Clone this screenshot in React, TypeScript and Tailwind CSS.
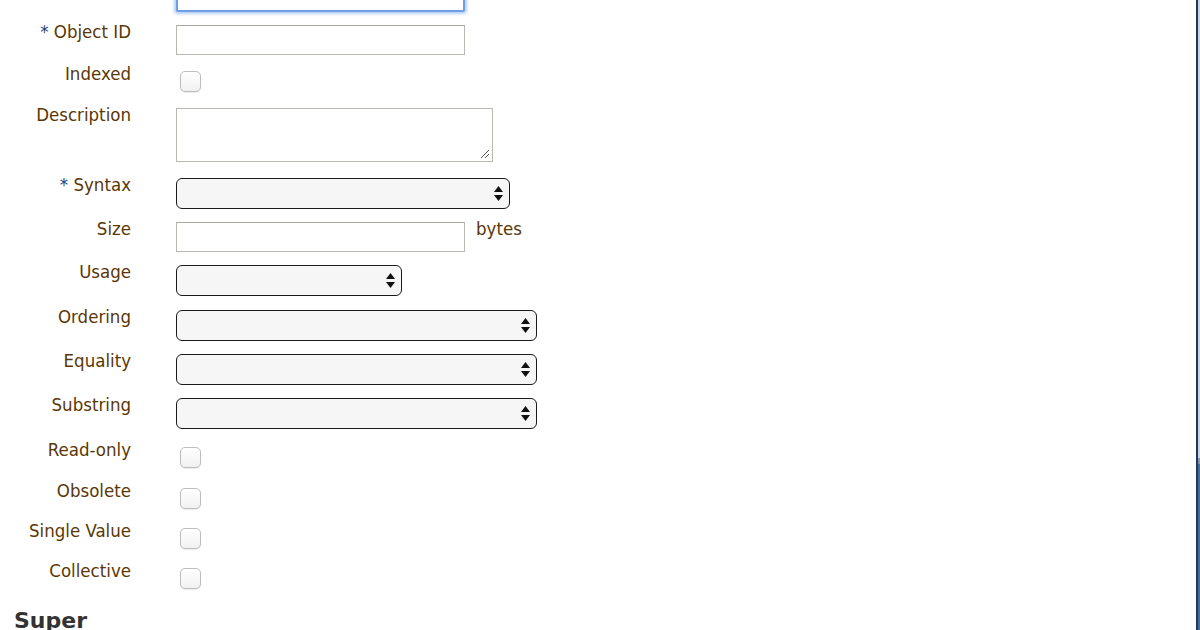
import React from "react";

const FONT = { fontFamily: '"DejaVu Sans Condensed", "DejaVu Sans", Verdana, sans-serif' };

function Label({ text, req, offset }: { text: string; req?: boolean; offset: string }) {
  return (
    <div
      className={`w-[131px] shrink-0 whitespace-nowrap text-right text-[18.5px] leading-[22px] text-[#5a3705] ${offset}`}
      style={FONT}
    >
      {req && <span className="text-[#1d3f7c]">* </span>}
      {text}
    </div>
  );
}

function Arrows() {
  return (
    <svg width="9" height="15" viewBox="0 0 9 15" className="shrink-0">
      <polygon points="0,6 4.5,0 9,6" fill="#111" />
      <polygon points="0,9 9,9 4.5,15" fill="#111" />
    </svg>
  );
}

function Select({ w }: { w: string }) {
  return (
    <div
      className={`${w} h-[31px] ml-[45px] rounded-[6px] border-[1.5px] border-[#1a1a1a] bg-[#f6f6f6] flex items-center justify-end pr-[6px]`}
    >
      <Arrows />
    </div>
  );
}

function Input({ w = "w-[289px]" }: { w?: string }) {
  return (
    <div
      className={`${w} h-[30px] ml-[45px] border-[1.5px] border-[#b8b8b2] border-t-[#a8a8a3] bg-white`}
    />
  );
}

function Checkbox() {
  return (
    <div className="ml-[49px] w-[21px] h-[21px] rounded-[5px] border border-[#bdbdbd] bg-gradient-to-b from-white to-[#f1f1f1] shadow-[0_1px_1px_rgba(0,0,0,0.08)]" />
  );
}

function InputRow({ label, req, mt, children }: { label: string; req?: boolean; mt: string; children: React.ReactNode }) {
  return (
    <div className={`flex items-start ${mt}`}>
      <Label text={label} req={req} offset="-mt-[4px]" />
      {children}
    </div>
  );
}

function CheckRow({ label, mt }: { label: string; mt: string }) {
  return (
    <div className={`flex items-start ${mt}`}>
      <Label text={label} offset="-mt-[8px]" />
      <Checkbox />
    </div>
  );
}

export default function App() {
  return (
    <div className="w-[1200px] h-[630px] overflow-hidden bg-white flex">
      <div className="flex-1 flex flex-col">
        {/* focused input, cut off at top */}
        <div className="flex items-start -mt-[18px]">
          <div className="w-[131px] shrink-0" />
          <div className="ml-[45px] w-[289px] h-[30px] rounded-[2px] border-[2px] border-[#6f9ee6] bg-white shadow-[0_0_3px_2px_rgba(120,165,235,0.55)]" />
        </div>

        <InputRow label="Object ID" req mt="mt-[13px]">
          <Input />
        </InputRow>

        <CheckRow label="Indexed" mt="mt-[16px]" />

        <InputRow label="Description" mt="mt-[16px]">
          <div className="relative ml-[45px] w-[317px] h-[54px] border-[1.5px] border-[#b8b8b2] bg-white">
            <svg width="10" height="10" viewBox="0 0 10 10" className="absolute right-[2px] bottom-[2px]">
              <line x1="1" y1="9" x2="9" y2="1" stroke="#555" strokeWidth="1" />
              <line x1="5" y1="9" x2="9" y2="5" stroke="#555" strokeWidth="1" />
            </svg>
          </div>
        </InputRow>

        <InputRow label="Syntax" req mt="mt-[16px]">
          <Select w="w-[334px]" />
        </InputRow>

        <InputRow label="Size" mt="mt-[13px]">
          <Input />
          <div className="ml-[11px] -mt-[4px] text-[18.5px] leading-[22px] text-[#5a3705]" style={FONT}>
            bytes
          </div>
        </InputRow>

        <InputRow label="Usage" mt="mt-[13px]">
          <Select w="w-[226px]" />
        </InputRow>

        <InputRow label="Ordering" mt="mt-[14px]">
          <Select w="w-[361px]" />
        </InputRow>

        <InputRow label="Equality" mt="mt-[13px]">
          <Select w="w-[361px]" />
        </InputRow>

        <InputRow label="Substring" mt="mt-[13px]">
          <Select w="w-[361px]" />
        </InputRow>

        <CheckRow label="Read-only" mt="mt-[18px]" />
        <CheckRow label="Obsolete" mt="mt-[20px]" />
        <CheckRow label="Single Value" mt="mt-[19px]" />
        <CheckRow label="Collective" mt="mt-[19px]" />

        <div
          className="mt-[18px] ml-[14px] text-[22px] leading-[28px] font-bold text-[#333333]"
          style={{ fontFamily: '"DejaVu Sans", Verdana, sans-serif' }}
        >
          Super
        </div>
      </div>

      {/* right window edge */}
      <div className="w-[4px] h-full flex shrink-0">
        <div className="w-[2px] h-full bg-[#1c3768]" />
        <div className="w-[2px] h-full flex flex-col">
          <div className="h-[458px] bg-[#cfd2d6]" />
          <div className="h-[6px] bg-[#8a95a5]" />
          <div className="flex-1 bg-[#4f6b92]" />
        </div>
      </div>
    </div>
  );
}
